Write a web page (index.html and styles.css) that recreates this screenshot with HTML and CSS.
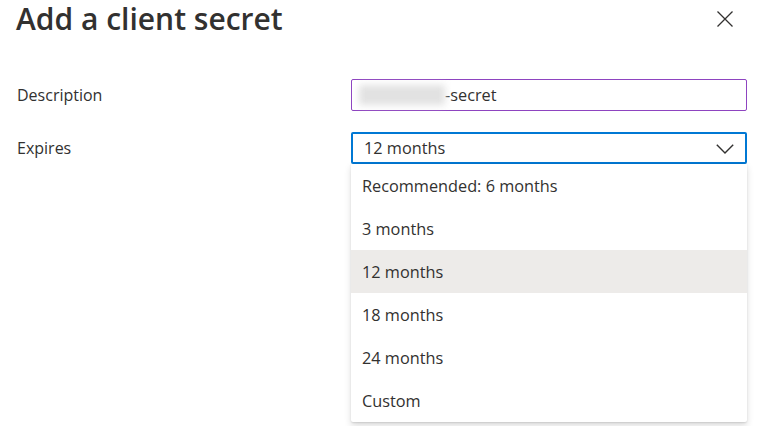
FILE: index.html
```html
<!DOCTYPE html>
<html lang="en">
<head>
<meta charset="utf-8">
<title>Add a client secret</title>
<link rel="stylesheet" href="styles.css">
</head>
<body>
<div class="panel">
  <header class="header">
    <h1 class="title">Add a client secret</h1>
    <button class="close" aria-label="Close">
      <svg width="16" height="16" viewBox="0 0 16 16"><path d="M0.5 0.5 L15.5 15.5 M15.5 0.5 L0.5 15.5" stroke="#323130" stroke-width="1.3" fill="none"/></svg>
    </button>
  </header>
  <div class="form">
    <div class="row">
      <label class="label">Description</label>
      <div class="control">
        <div class="input input-desc"><span class="blurred"></span><span>-secret</span></div>
      </div>
    </div>
    <div class="row">
      <label class="label">Expires</label>
      <div class="control">
        <div class="input input-select">
          <span>12 months</span>
          <svg class="chevron" width="18" height="10" viewBox="0 0 18 10"><path d="M0.8 0.8 L9 9 L17.2 0.8" stroke="#323130" stroke-width="1.4" fill="none"/></svg>
        </div>
        <ul class="menu">
          <li class="item">Recommended: 6 months</li>
          <li class="item">3 months</li>
          <li class="item item-selected">12 months</li>
          <li class="item">18 months</li>
          <li class="item">24 months</li>
          <li class="item">Custom</li>
        </ul>
      </div>
    </div>
  </div>
</div>
</body>
</html>
```
FILE: styles.css
```css
* { box-sizing: border-box; }
html, body { margin: 0; padding: 0; background: #ffffff; }
body {
  font-family: "Open Sans", "Noto Sans", "Liberation Sans", sans-serif;
  color: #323130;
  width: 768px;
  height: 426px;
  overflow: hidden;
}
.panel { padding: 0 21px 0 16px; }
.header {
  display: flex;
  justify-content: space-between;
  align-items: flex-start;
  height: 79px;
  padding-top: 3px;
}
.title {
  margin: 0;
  font-size: 30px;
  line-height: 32px;
  font-weight: 600;
  color: #323130;
}
.close {
  margin: 8px 14px 0 0;
  padding: 0;
  border: 0;
  background: none;
  width: 16px;
  height: 16px;
  display: flex;
}
.form { display: flex; flex-direction: column; gap: 21px; }
.row { display: flex; align-items: flex-start; }
.label {
  width: 335px;
  font-size: 16px;
  line-height: 32px;
  padding-left: 1px;
}
.control { position: relative; width: 396px; }
.input {
  height: 32px;
  display: flex;
  align-items: center;
  font-size: 16.3px;
  border-radius: 2px;
  padding: 0 11px;
}
.input-desc { border: 1px solid #8e44c0; padding-left: 12px; }
.blurred {
  display: inline-block;
  width: 86px;
  height: 20px;
  margin-left: -5px;
  background: #e2e2e2;
  filter: blur(3.5px);
  margin-right: 0;
}
.input-select {
  border: 2px solid #0078d4;
  justify-content: space-between;
  padding-right: 11px;
}
.chevron { display: block; margin-top: 1px; }
.menu {
  position: absolute;
  left: 0;
  top: 32px;
  width: 396px;
  margin: 0;
  padding: 0;
  list-style: none;
  background: #ffffff;
  border-radius: 0 0 2px 2px;
  box-shadow: 0 3.2px 7.2px rgba(0,0,0,0.132), 0 0.6px 1.8px rgba(0,0,0,0.108);
}
.item {
  height: 43px;
  display: flex;
  align-items: center;
  padding-left: 11px;
  font-size: 16.3px;
}
.item-selected { background: #edebe9; }
```
